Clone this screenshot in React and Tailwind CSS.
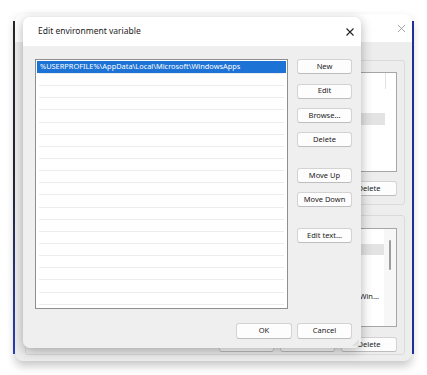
const font = { fontFamily: '"Noto Sans", "Open Sans", sans-serif' };

const sideButtons = [
  { label: 'New', mt: 'mt-0' },
  { label: 'Edit', mt: 'mt-[9.5px]' },
  { label: 'Browse...', mt: 'mt-[9.5px]' },
  { label: 'Delete', mt: 'mt-[9px]' },
  { label: 'Move Up', mt: 'mt-[21px]' },
  { label: 'Move Down', mt: 'mt-[9px]' },
  { label: 'Edit text...', mt: 'mt-[21px]' },
];

function WinButton({ children, className = '' }) {
  return (
    <div
      className={`h-[15px] flex items-center justify-center rounded-[3px] border border-[#d3d3d3] border-b-[#bdbdbd] bg-[#fdfdfd] text-[7.5px] text-[#1b1b1b] leading-none ${className}`}
    >
      {children}
    </div>
  );
}

function BackButtons() {
  return (
    <div className="flex justify-end gap-[6px]">
      <WinButton className="w-[55px]">New...</WinButton>
      <WinButton className="w-[55px]">Edit...</WinButton>
      <WinButton className="w-[56px]">Delete</WinButton>
    </div>
  );
}

function BackWindow() {
  return (
    <div className="absolute left-[13px] top-[14px] flex items-center">
      <div className="w-[2px] h-[333px] bg-gradient-to-b from-[#2a2a2a] via-[#2a2a3a] to-[#2c45c8]" />
      <div className="w-[397px] h-[347px] rounded-[8px] bg-[#ededed] overflow-hidden shadow-[0_5px_10px_rgba(0,0,0,0.22)] flex flex-col">
        <div className="h-[28px] bg-white flex items-center justify-end pr-[6px] shrink-0">
          <svg width="9" height="9" viewBox="0 0 10 10">
            <path d="M1 1 L9 9 M9 1 L1 9" stroke="#9a9a9a" strokeWidth="1" />
          </svg>
        </div>
        <div className="flex flex-col pl-[10px] pr-[7px]">
          {/* user variables */}
          <div className="mt-[18px] h-[145px] border border-[#dadada] rounded-[3px] pt-[11px] pr-[7px] pl-[8px] flex flex-col">
            <div className="h-[100px] bg-white border border-[#a6a6a6] flex">
              <div className="flex-1 flex flex-col">
                <div className="mt-[40px] h-[12px] bg-[#e3e3e3]" />
              </div>
              <div className="w-[11px] flex flex-col">
                <div className="w-[1px] h-[16px] bg-[#e2e2e2]" />
              </div>
            </div>
            <div className="mt-[9px]">
              <BackButtons />
            </div>
          </div>
          {/* system variables */}
          <div className="mt-[10px] h-[140px] border border-[#dadada] rounded-[3px] pt-[12px] pr-[7px] pl-[8px] flex flex-col">
            <div className="h-[99px] bg-white border border-[#a6a6a6] flex">
              <div className="flex-1 flex flex-col">
                <div className="mt-[15px] h-[11px] bg-[#e3e3e3]" />
                <div className="mt-[36px] h-[12px] flex items-center justify-end pr-[5px] text-[7.5px] text-[#222] leading-none">
                  %SystemRoot%\system32\Win...
                </div>
              </div>
              <div className="w-[12px] flex justify-center bg-[#f7f7f7]">
                <div className="mt-[11px] w-[2px] h-[30px] rounded-full bg-[#9d9d9d]" />
              </div>
            </div>
            <div className="mt-[10px]">
              <BackButtons />
            </div>
          </div>
        </div>
      </div>
      <div className="w-[2px] h-[333px] bg-[#1f2f9a]" />
    </div>
  );
}

function Dialog() {
  const rows = Array.from({ length: 19 });
  return (
    <div className="absolute left-[23px] top-[17px] w-[338px] h-[331px] rounded-[7px] bg-[#efefef] overflow-hidden shadow-[0_3px_12px_rgba(0,0,0,0.3)] flex flex-col">
      <div className="h-[29px] bg-white flex items-center justify-between pl-[15px] pr-[6px] shrink-0">
        <span className="text-[8.5px] text-[#1b1b1b]">Edit environment variable</span>
        <svg width="10" height="10" viewBox="0 0 10 10">
          <path d="M1.5 1.5 L8.5 8.5 M8.5 1.5 L1.5 8.5" stroke="#222" strokeWidth="1.1" />
        </svg>
      </div>
      <div className="flex flex-col pl-[12px] pr-[9px] pt-[13px]">
        <div className="flex gap-[9px]">
          <div className="w-[253px] h-[250px] bg-white border border-[#8f8f8f] p-[1px] overflow-hidden">
            <div className="h-[12px] bg-[#1d72d6] flex items-center pl-[3px] text-[7.4px] text-white leading-none whitespace-nowrap">
              %USERPROFILE%\AppData\Local\Microsoft\WindowsApps
            </div>
            <div className="px-[2px]">
              {rows.map((_, i) => (
                <div key={i} className="h-[12.15px] border-t border-[#ececec]" />
              ))}
              <div className="border-t border-[#ececec]" />
            </div>
          </div>
          <div className="w-[55px] flex flex-col">
            {sideButtons.map((b) => (
              <WinButton key={b.label} className={b.mt}>
                {b.label}
              </WinButton>
            ))}
          </div>
        </div>
        <div className="mt-[14px] flex justify-end gap-[5px]">
          <WinButton className="w-[56px] h-[16px] border-[#3f86cc] border-b-[#3f86cc]">OK</WinButton>
          <WinButton className="w-[55px] h-[16px]">Cancel</WinButton>
        </div>
      </div>
      <svg className="absolute right-[2px] bottom-[2px]" width="6" height="6" viewBox="0 0 6 6">
        <circle cx="5" cy="1" r="0.5" fill="#a0a0a0" />
        <circle cx="3" cy="3" r="0.5" fill="#a0a0a0" />
        <circle cx="5" cy="3" r="0.5" fill="#a0a0a0" />
        <circle cx="1" cy="5" r="0.5" fill="#a0a0a0" />
        <circle cx="3" cy="5" r="0.5" fill="#a0a0a0" />
        <circle cx="5" cy="5" r="0.5" fill="#a0a0a0" />
      </svg>
    </div>
  );
}

export default function App() {
  return (
    <div className="w-[427px] h-[375px] bg-white relative overflow-hidden" style={font}>
      <BackWindow />
      <Dialog />
    </div>
  );
}
